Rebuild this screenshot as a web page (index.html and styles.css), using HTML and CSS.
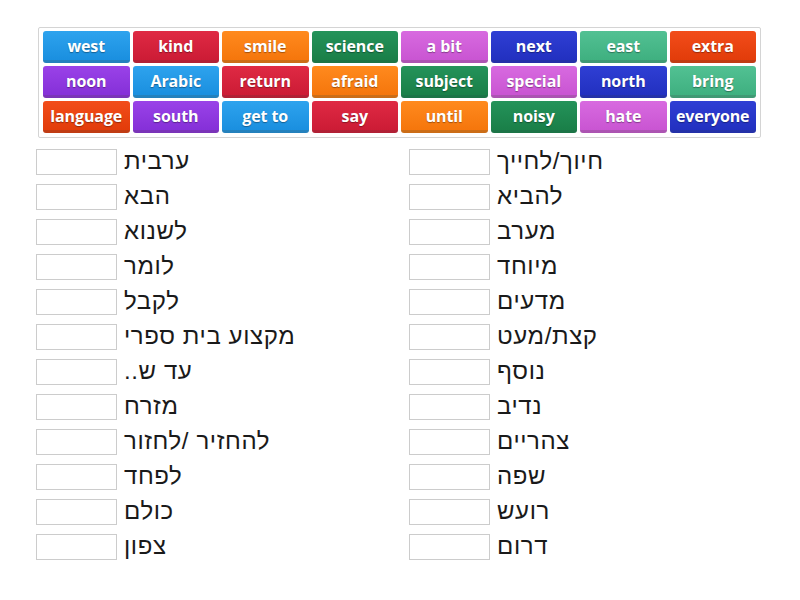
FILE: index.html
```html
<!DOCTYPE html>
<html lang="en">
<head>
<meta charset="utf-8">
<title>Match up</title>
<link rel="stylesheet" href="styles.css">
</head>
<body>
<div class="page">
  <div class="bank">
    <div class="tile c-blue">west</div>
    <div class="tile c-red">kind</div>
    <div class="tile c-orange">smile</div>
    <div class="tile c-green">science</div>
    <div class="tile c-pink">a bit</div>
    <div class="tile c-navy">next</div>
    <div class="tile c-mint">east</div>
    <div class="tile c-flame">extra</div>

    <div class="tile c-purple">noon</div>
    <div class="tile c-blue">Arabic</div>
    <div class="tile c-red">return</div>
    <div class="tile c-orange">afraid</div>
    <div class="tile c-green">subject</div>
    <div class="tile c-pink">special</div>
    <div class="tile c-navy">north</div>
    <div class="tile c-mint">bring</div>

    <div class="tile c-flame">language</div>
    <div class="tile c-purple">south</div>
    <div class="tile c-blue">get to</div>
    <div class="tile c-red">say</div>
    <div class="tile c-orange">until</div>
    <div class="tile c-green">noisy</div>
    <div class="tile c-pink">hate</div>
    <div class="tile c-navy">everyone</div>
  </div>

  <div class="answers">
    <div class="col">
      <div class="row"><span class="box"></span><span class="label" dir="rtl">ערבית</span></div>
      <div class="row"><span class="box"></span><span class="label" dir="rtl">הבא</span></div>
      <div class="row"><span class="box"></span><span class="label" dir="rtl">לשנוא</span></div>
      <div class="row"><span class="box"></span><span class="label" dir="rtl">לומר</span></div>
      <div class="row"><span class="box"></span><span class="label" dir="rtl">לקבל</span></div>
      <div class="row"><span class="box"></span><span class="label" dir="rtl">מקצוע בית ספרי</span></div>
      <div class="row"><span class="box"></span><span class="label" dir="rtl">עד ש..</span></div>
      <div class="row"><span class="box"></span><span class="label" dir="rtl">מזרח</span></div>
      <div class="row"><span class="box"></span><span class="label" dir="rtl">להחזיר /לחזור</span></div>
      <div class="row"><span class="box"></span><span class="label" dir="rtl">לפחד</span></div>
      <div class="row"><span class="box"></span><span class="label" dir="rtl">כולם</span></div>
      <div class="row"><span class="box"></span><span class="label" dir="rtl">צפון</span></div>
    </div>
    <div class="col">
      <div class="row"><span class="box"></span><span class="label" dir="rtl">חיוך/לחייך</span></div>
      <div class="row"><span class="box"></span><span class="label" dir="rtl">להביא</span></div>
      <div class="row"><span class="box"></span><span class="label" dir="rtl">מערב</span></div>
      <div class="row"><span class="box"></span><span class="label" dir="rtl">מיוחד</span></div>
      <div class="row"><span class="box"></span><span class="label" dir="rtl">מדעים</span></div>
      <div class="row"><span class="box"></span><span class="label" dir="rtl">קצת/מעט</span></div>
      <div class="row"><span class="box"></span><span class="label" dir="rtl">נוסף</span></div>
      <div class="row"><span class="box"></span><span class="label" dir="rtl">נדיב</span></div>
      <div class="row"><span class="box"></span><span class="label" dir="rtl">צהריים</span></div>
      <div class="row"><span class="box"></span><span class="label" dir="rtl">שפה</span></div>
      <div class="row"><span class="box"></span><span class="label" dir="rtl">רועש</span></div>
      <div class="row"><span class="box"></span><span class="label" dir="rtl">דרום</span></div>
    </div>
  </div>
</div>
</body>
</html>
```

FILE: styles.css
```css
html, body {
  margin: 0;
  padding: 0;
  background: #ffffff;
}

.page {
  padding: 27px 0 0 36px;
  font-family: "Open Sans", "DejaVu Sans", sans-serif;
}

.bank {
  margin-left: 2px;
  width: 713px;
  padding: 3px 4px 4px 4px;
  border: 1px solid #d4d4d4;
  border-radius: 2px;
  display: grid;
  grid-template-columns: repeat(8, 1fr);
  grid-auto-rows: 32px;
  column-gap: 3px;
  row-gap: 3px;
}

.tile {
  display: flex;
  align-items: center;
  justify-content: center;
  border-radius: 3px;
  color: #ffffff;
  font-weight: 700;
  font-size: 16px;
  letter-spacing: -0.1px;
  text-shadow: 0 1px 1px rgba(0, 0, 0, 0.35);
  border-bottom: 3px solid rgba(0, 0, 0, 0.2);
  box-sizing: border-box;
  padding-top: 1px;
  white-space: nowrap;
}

.c-blue   { background: linear-gradient(#2ea3ee, #1a8fdf); }
.c-red    { background: linear-gradient(#df2a44, #cc1b35); }
.c-orange { background: linear-gradient(#ff8a1e, #f5760c); }
.c-green  { background: linear-gradient(#24935a, #1a7f48); }
.c-pink   { background: linear-gradient(#d86ae0, #c955d2); }
.c-navy   { background: linear-gradient(#2f3fd4, #2230c0); }
.c-mint   { background: linear-gradient(#52c193, #3fb080); }
.c-flame  { background: linear-gradient(#f24d1a, #e23c0a); }
.c-purple { background: linear-gradient(#9a42e8, #8530d8); }

.answers {
  margin-top: 11px;
  display: grid;
  grid-template-columns: 373px 373px;
}

.col {
  display: flex;
  flex-direction: column;
  gap: 9px;
}

.row {
  display: flex;
  align-items: center;
  height: 26px;
}

.box {
  width: 79px;
  height: 24px;
  border: 1px solid #cccccc;
  flex: none;
}

.label {
  margin-left: 7px;
  font-family: "Liberation Sans", "DejaVu Sans", sans-serif;
  font-size: 24px;
  letter-spacing: 0.6px;
  color: #1a1a1a;
  line-height: 26px;
  margin-top: -2px;
  white-space: nowrap;
}
```
